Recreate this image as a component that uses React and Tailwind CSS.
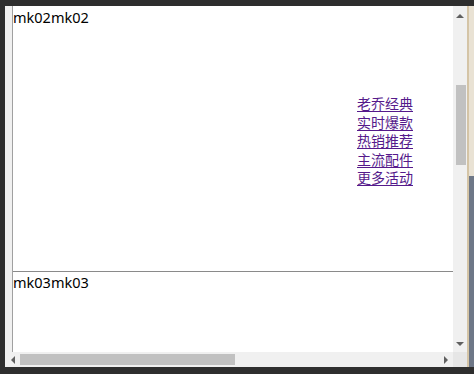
import React from 'react';

const links = ['老乔经典', '实时爆款', '热销推荐', '主流配件', '更多活动'];

function Arrow({ dir }) {
  // small solid triangles used by the scrollbar buttons
  const pts = {
    up: '0,5 4,1 8,5',
    down: '0,1 4,5 8,1',
    left: '5,0 1,4 5,8',
    right: '1,0 5,4 1,8',
  }[dir];
  const vertical = dir === 'up' || dir === 'down';
  return (
    <svg width={vertical ? 8 : 6} height={vertical ? 6 : 8} viewBox={vertical ? '0 0 8 6' : '0 0 6 8'}>
      <polygon points={pts} fill="#606060" />
    </svg>
  );
}

export default function App() {
  return (
    <div className="w-[474px] h-[374px] bg-[#2e2e2e] pt-[6px] pl-[5px] pb-[7px] flex overflow-hidden">
      <div className="flex-1 flex flex-col min-w-0">
        <div className="flex flex-1 min-h-0">
          <div className="w-[7px] bg-[#f0f0f0]" />

          {/* page content */}
          <div
            className="flex-1 min-w-0 bg-white border-l border-[#a0a0a0] overflow-hidden text-black"
            style={{ fontFamily: '"Noto Sans", "Noto Sans CJK SC", sans-serif' }}
          >
            <div className="h-[266px] border-b border-[#8a8a8a] flex justify-between">
              <div className="text-[14.5px] leading-[20px] pt-[1px]">mk02mk02</div>
              <div className="self-center flex flex-col mr-[40px] mt-[6px] text-[14px] leading-[18.5px]">
                {links.map((t) => (
                  <a key={t} href="#" className="text-[#551a8b] underline underline-offset-2">
                    {t}
                  </a>
                ))}
              </div>
            </div>
            <div className="text-[14.5px] leading-[20px]">mk03mk03</div>
          </div>

          {/* vertical scrollbar */}
          <div className="w-[14px] bg-[#f0f0f0] flex flex-col items-center">
            <div className="h-[17px] flex items-center justify-center pt-[2px]">
              <Arrow dir="up" />
            </div>
            <div className="flex-1 w-full pl-[3px] pr-[1px]">
              <div className="mt-[62px] h-[80px] bg-[#c1c1c1]" />
            </div>
            <div className="h-[17px] flex items-center justify-center">
              <Arrow dir="down" />
            </div>
          </div>
        </div>

        {/* horizontal scrollbar */}
        <div className="h-[15px] flex bg-[#f0f0f0]">
          <div className="w-[14px] flex items-center justify-center pl-[2px]">
            <Arrow dir="left" />
          </div>
          <div className="flex-1 flex items-center pl-[1px]">
            <div className="w-[215px] h-[11px] bg-[#c1c1c1]" />
          </div>
          <div className="w-[14px] flex items-center justify-center">
            <Arrow dir="right" />
          </div>
          <div className="w-[14px] bg-[#e6e6e6]" />
        </div>
      </div>

      {/* window edge on the right */}
      <div className="w-[7px] flex">
        <div className="w-[2px] bg-[#d4c4a6]" />
        <div className="flex-1 flex flex-col">
          <div className="h-[170px] bg-[#e9e2d4]" />
          <div className="flex-1 bg-[#6e7787]" />
        </div>
      </div>
    </div>
  );
}
